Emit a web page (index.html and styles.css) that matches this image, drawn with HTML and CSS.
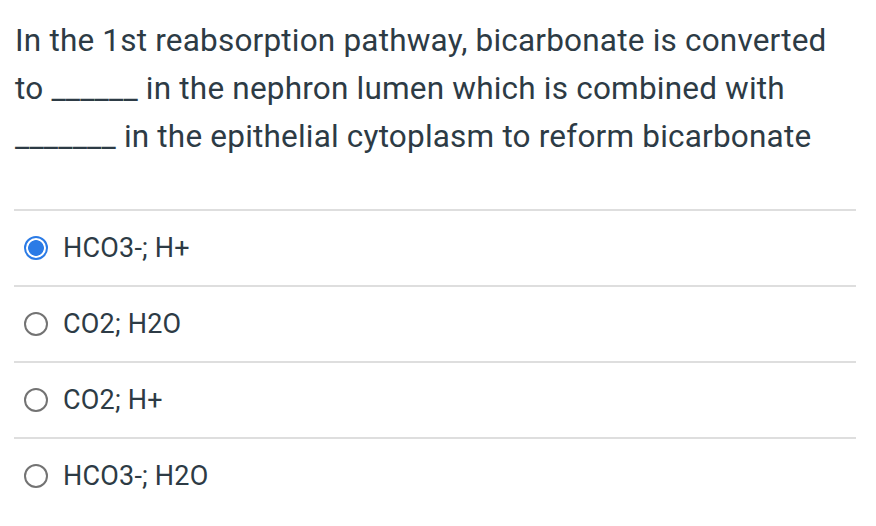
FILE: index.html
```html
<!DOCTYPE html>
<html>
<head>
<meta charset="utf-8">
<link rel="stylesheet" href="styles.css">
</head>
<body>
<div class="quiz">
  <p class="question">In the 1st reabsorption pathway, bicarbonate is converted to ______ in the nephron lumen which is combined with _______ in the epithelial cytoplasm to reform bicarbonate</p>
  <div class="answers">
    <label class="answer"><span class="radio checked"></span><span class="text">HCO3-; H+</span></label>
    <label class="answer"><span class="radio"></span><span class="text">CO2; H2O</span></label>
    <label class="answer"><span class="radio"></span><span class="text">CO2; H+</span></label>
    <label class="answer"><span class="radio"></span><span class="text">HCO3-; H2O</span></label>
  </div>
</div>
</body>
</html>
```
FILE: styles.css
```css
html, body {
  margin: 0;
  padding: 0;
  background: #fff;
}
body {
  font-family: Roboto, "Liberation Sans", sans-serif;
  color: #2d3b45;
}
.quiz {
  padding: 0 20px 0 14px;
}
.question {
  margin: 0;
  padding: 17px 0 0 1px;
  font-size: 31.5px;
  letter-spacing: 0.2px;
  line-height: 48px;
}
.answers {
  margin-top: 48px;
}
.answer {
  display: flex;
  align-items: center;
  height: 74px;
  border-top: 2px solid #dedede;
  padding-left: 10px;
}
.radio {
  width: 24px;
  height: 24px;
  border: 2px solid #737373;
  border-radius: 50%;
  box-sizing: border-box;
  margin-right: 15px;
  flex: none;
}
.radio.checked {
  border-color: #2b7be6;
  background: radial-gradient(circle, #2b7be6 0 7.5px, #fff 8.2px);
}
.text {
  font-size: 27px;
  letter-spacing: 0.2px;
}
```
